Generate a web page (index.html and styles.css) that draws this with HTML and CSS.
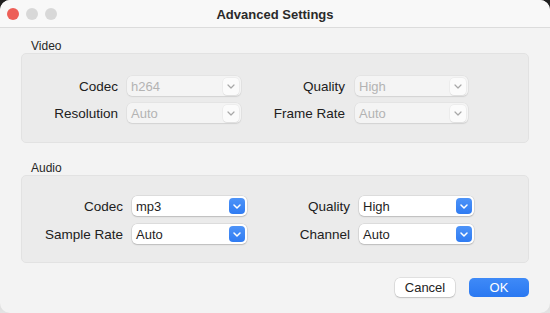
FILE: index.html
```html
<!DOCTYPE html>
<html>
<head>
<meta charset="utf-8">
<link rel="stylesheet" href="styles.css">
</head>
<body>
<div class="window">
  <div class="titlebar">
    <div class="lights">
      <span class="light red"></span>
      <span class="light gray"></span>
      <span class="light gray"></span>
    </div>
    <div class="title">Advanced Settings</div>
  </div>
  <div class="content">
    <div class="group-label">Video</div>
    <div class="group video">
      <div class="grid grid-video">
        <div class="label">Codec</div>
        <div class="select disabled"><span class="value">h264</span><span class="stepper"><svg width="8" height="5" viewBox="0 0 8 5"><path d="M1 1 L4 4 L7 1" fill="none" stroke="#a8a8a8" stroke-width="1.2" stroke-linecap="round" stroke-linejoin="round"/></svg></span></div>
        <div class="label">Quality</div>
        <div class="select disabled"><span class="value">High</span><span class="stepper"><svg width="8" height="5" viewBox="0 0 8 5"><path d="M1 1 L4 4 L7 1" fill="none" stroke="#a8a8a8" stroke-width="1.2" stroke-linecap="round" stroke-linejoin="round"/></svg></span></div>
        <div class="label">Resolution</div>
        <div class="select disabled"><span class="value">Auto</span><span class="stepper"><svg width="8" height="5" viewBox="0 0 8 5"><path d="M1 1 L4 4 L7 1" fill="none" stroke="#a8a8a8" stroke-width="1.2" stroke-linecap="round" stroke-linejoin="round"/></svg></span></div>
        <div class="label">Frame Rate</div>
        <div class="select disabled"><span class="value">Auto</span><span class="stepper"><svg width="8" height="5" viewBox="0 0 8 5"><path d="M1 1 L4 4 L7 1" fill="none" stroke="#a8a8a8" stroke-width="1.2" stroke-linecap="round" stroke-linejoin="round"/></svg></span></div>
      </div>
    </div>
    <div class="group-label audio-label">Audio</div>
    <div class="group audio">
      <div class="grid grid-audio">
        <div class="label">Codec</div>
        <div class="select"><span class="value">mp3</span><span class="stepper blue"><svg width="8" height="5" viewBox="0 0 8 5"><path d="M1 1 L4 4 L7 1" fill="none" stroke="#ffffff" stroke-width="1.5" stroke-linecap="round" stroke-linejoin="round"/></svg></span></div>
        <div class="label">Quality</div>
        <div class="select"><span class="value">High</span><span class="stepper blue"><svg width="8" height="5" viewBox="0 0 8 5"><path d="M1 1 L4 4 L7 1" fill="none" stroke="#ffffff" stroke-width="1.5" stroke-linecap="round" stroke-linejoin="round"/></svg></span></div>
        <div class="label">Sample Rate</div>
        <div class="select"><span class="value">Auto</span><span class="stepper blue"><svg width="8" height="5" viewBox="0 0 8 5"><path d="M1 1 L4 4 L7 1" fill="none" stroke="#ffffff" stroke-width="1.5" stroke-linecap="round" stroke-linejoin="round"/></svg></span></div>
        <div class="label">Channel</div>
        <div class="select"><span class="value">Auto</span><span class="stepper blue"><svg width="8" height="5" viewBox="0 0 8 5"><path d="M1 1 L4 4 L7 1" fill="none" stroke="#ffffff" stroke-width="1.5" stroke-linecap="round" stroke-linejoin="round"/></svg></span></div>
      </div>
    </div>
    <div class="buttons">
      <button class="btn cancel">Cancel</button>
      <button class="btn ok">OK</button>
    </div>
  </div>
</div>
</body>
</html>
```

FILE: styles.css
```css
html, body {
  margin: 0;
  padding: 0;
  width: 550px;
  height: 313px;
  overflow: hidden;
}
body {
  background: linear-gradient(#1e1e1e 0, #6a6a6a 50%, #e4e4e4 100%);
  font-family: "Liberation Sans", Arial, sans-serif;
  color: #242424;
}
.window {
  width: 550px;
  height: 313px;
  border-radius: 10px;
  overflow: hidden;
  background: #f3f3f3;
  display: flex;
  flex-direction: column;
}
.titlebar {
  height: 27px;
  border-bottom: 1px solid #dcdcdc;
  background: #f8f8f8;
  position: relative;
  display: flex;
  align-items: center;
  justify-content: center;
}
.lights {
  position: absolute;
  left: 7px;
  top: 8px;
  display: flex;
  gap: 7px;
}
.light {
  width: 12px;
  height: 12px;
  border-radius: 50%;
  display: block;
}
.light.red { background: #ed5f57; }
.light.gray { background: #d8d8d8; }
.title {
  font-weight: bold;
  font-size: 13px;
  color: #2a2a2a;
  margin-top: 1px;
}
.content {
  padding: 0 21px;
  display: flex;
  flex-direction: column;
}
.group-label {
  font-size: 12px;
  line-height: 14px;
  height: 14px;
  margin-top: 11px;
  padding-left: 10px;
  color: #262626;
}
.audio-label {
  margin-top: 18px;
}
.group {
  background: #ebebeb;
  border: 1px solid #e2e2e2;
  border-radius: 5px;
}
.group.video {
  padding: 22px 0 19px;
}
.group.audio {
  padding: 20px 0 18px;
}
.grid {
  display: grid;
  align-items: center;
}
.grid-video {
  grid-template-columns: 96px 114px 95px 114px;
  column-gap: 9px;
  row-gap: 7px;
}
.grid-video > .select:nth-child(4n) { margin-left: 1px; }
.grid-audio {
  grid-template-columns: 101px 115px 94px 115px;
  column-gap: 9px;
  row-gap: 8px;
}
.label {
  text-align: right;
  font-size: 13.5px;
  color: #202020;
  white-space: nowrap;
}
.select {
  height: 20px;
  box-sizing: border-box;
  border-radius: 5px;
  background: #ffffff;
  box-shadow: 0 0 0 0.5px rgba(0,0,0,0.12), 0 1px 1.5px rgba(0,0,0,0.15);
  display: flex;
  align-items: center;
  justify-content: space-between;
  padding: 0 2px 0 4px;
  font-size: 13px;
  color: #1f1f1f;
}
.select.disabled {
  background: #f4f4f4;
  box-shadow: 0 0 0 0.5px rgba(0,0,0,0.06), 0 1px 1.5px rgba(0,0,0,0.08);
  color: #b3b3b3;
}
.stepper {
  width: 16px;
  height: 17px;
  border-radius: 4px;
  display: flex;
  align-items: center;
  justify-content: center;
  background: #fbfbfb;
  box-shadow: 0 0 0 0.5px rgba(0,0,0,0.06), 0 1px 1px rgba(0,0,0,0.06);
}
.stepper.blue {
  height: 16px;
  background: linear-gradient(#4d93f8, #2f7bf2);
  box-shadow: none;
}
.buttons {
  display: flex;
  justify-content: flex-end;
  gap: 14px;
  margin-top: 15px;
}
.btn {
  width: 60px;
  height: 19px;
  border: none;
  border-radius: 5px;
  font-family: "Liberation Sans", Arial, sans-serif;
  font-size: 13px;
  padding: 0;
  line-height: 19px;
}
.btn.cancel {
  background: #ffffff;
  color: #242424;
  box-shadow: 0 0 0 0.5px rgba(0,0,0,0.14), 0 1px 1.5px rgba(0,0,0,0.15);
}
.btn.ok {
  background: linear-gradient(#3f8af7, #2a78f1);
  color: #ffffff;
}
```
